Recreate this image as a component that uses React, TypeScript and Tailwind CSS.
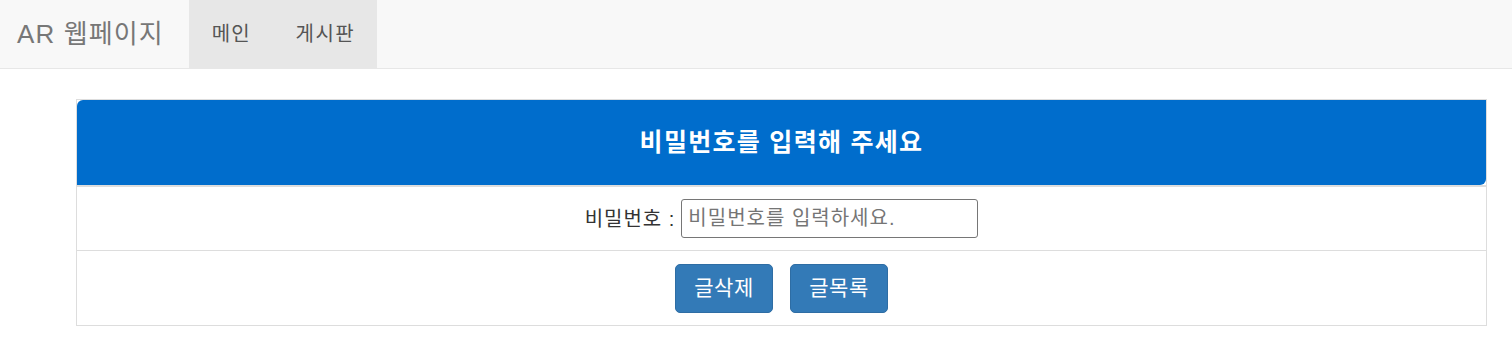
export default function App() {
  const font = "font-['Liberation_Sans','Noto_Sans_CJK_KR',sans-serif]";
  return (
    <div className={`min-h-[346px] bg-white ${font}`}>
      {/* Navbar */}
      <nav className="h-[69px] bg-[#f8f8f8] border-b border-[#e7e7e7] flex items-stretch">
        <div className="pl-[17px] pr-[25px] flex items-center text-[26px] text-[#777] tracking-[1.1px]">
          AR 웹페이지
        </div>
        <ul className="flex bg-[#e7e7e7]">
          <li className="px-[23px] flex items-center text-[20px] text-[#555] tracking-[1px]">메인</li>
          <li className="px-[22px] flex items-center text-[20px] text-[#555] tracking-[1.5px]">게시판</li>
        </ul>
      </nav>

      {/* Password table */}
      <div className="mt-[30px] ml-[76px] w-[1411px] border border-[#ddd]">
        <div className="h-[85px] bg-[#006dcc] rounded-tl-[6px] rounded-br-[6px] flex items-center justify-center text-white text-[25px] font-bold tracking-[1.3px]">
          비밀번호를 입력해 주세요
        </div>
        <div className="h-[2px] bg-[#ddd]" />
        <div className="h-[64px] flex items-center justify-center gap-[6px] border-b border-[#ddd]">
          <span className="text-[20px] text-[#333] tracking-[1px]">비밀번호 :</span>
          <input
            type="password"
            placeholder="비밀번호를 입력하세요."
            className="w-[297px] h-[39px] border border-[#767676] rounded-[3px] px-[6px] text-[20px] tracking-[1px] placeholder:text-[#757575] outline-none"
          />
        </div>
        <div className="h-[74px] flex items-center justify-center gap-[17px]">
          <button className="w-[98px] h-[49px] bg-[#337ab7] border border-[#2e6da4] rounded-[5px] text-white text-[21px] tracking-[0.5px]">
            글삭제
          </button>
          <button className="w-[98px] h-[49px] bg-[#337ab7] border border-[#2e6da4] rounded-[5px] text-white text-[21px] tracking-[0.5px]">
            글목록
          </button>
        </div>
      </div>
    </div>
  );
}
